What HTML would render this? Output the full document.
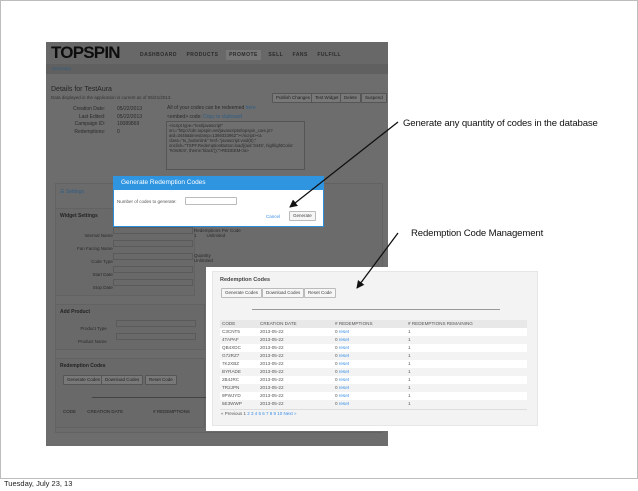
<!DOCTYPE html>
<html><head><style>
*{margin:0;padding:0;box-sizing:border-box}
body{width:638px;height:491px;background:#fff;position:relative;overflow:hidden;font-family:"Liberation Sans",sans-serif}
.a{position:absolute}
.t{position:absolute;font-size:5px;color:#3a3a3a;white-space:nowrap}
.btn{position:absolute;height:10px;border:1px solid #bbb;background:#f6f6f6;font-size:4.5px;color:#444;line-height:8px;padding:0 3px;border-radius:1px;white-space:nowrap}
.row{position:absolute;left:8px;width:318px;height:8px;font-size:4.6px;color:#555;line-height:8px}
.row span{position:absolute}
.lk{color:#3a8ee6}
</style></head><body>
<div class="a" style="left:0;top:0;width:638px;height:479px;border:1px solid #bdbdbd"></div>
<!-- dark screenshot -->
<div class="a" style="left:46px;top:42px;width:342px;height:404px;background:#6d6d6d"></div>
<div class="a" style="left:46px;top:42px;width:342px;height:22px;background:#686868"></div>
<div class="a" style="left:51px;top:44px;font-size:17px;font-weight:bold;color:#0d0d0d;letter-spacing:-0.8px;line-height:17px">TOPSPIN</div>
<div class="t" style="left:140px;top:52px;color:#2a2a2a;font-weight:bold;letter-spacing:.5px">DASHBOARD &nbsp;&nbsp;&nbsp; PRODUCTS &nbsp;&nbsp;&nbsp;<span style="background:#777;padding:2px 3px">PROMOTE</span>&nbsp;&nbsp;&nbsp; SELL &nbsp;&nbsp;&nbsp; FANS &nbsp;&nbsp;&nbsp; FULFILL</div>
<div class="a" style="left:46px;top:64px;width:342px;height:10px;background:#606060"></div>
<div class="t" style="left:52px;top:66px;color:#2d5d85;font-size:4.5px">Summary</div>
<div class="t" style="left:51px;top:86px;font-size:7px;color:#252525">Details for TestAura</div>
<div class="t" style="left:51px;top:95px;font-size:4.5px;color:#333">Data displayed in the application is current as of 05/21/2013.</div>
<div class="btn" style="left:272px;top:93px;background:#787878;border-color:#555;color:#222">Publish Changes</div>
<div class="btn" style="left:311px;top:93px;background:#787878;border-color:#555;color:#222">Test Widget</div>
<div class="btn" style="left:340px;top:93px;background:#787878;border-color:#555;color:#222">Delete</div>
<div class="btn" style="left:361px;top:93px;background:#787878;border-color:#555;color:#222">Suspend</div>
<div class="t" style="left:73px;top:106px;line-height:7.5px;text-align:right;color:#2a2a2a">Creation Date:<br>Last Edited:<br>Campaign ID:<br>Redemptions:</div>
<div class="t" style="left:117px;top:106px;line-height:7.5px;color:#2a2a2a">05/22/2013<br>05/22/2013<br>10089869<br>0</div>
<div class="t" style="left:167px;top:105px;color:#2a2a2a">All of your codes can be redeemed <span style="color:#2d5d85">here</span></div>
<div class="t" style="left:167px;top:114px;color:#2a2a2a">&lt;embed&gt; code: <span style="color:#2d5d85">Copy to clipboard</span></div>
<div class="a" style="left:166px;top:121px;width:139px;height:49px;border:1px solid #555;background:#6f6f6f"></div>
<div class="t" style="left:169px;top:123px;font-size:4.3px;line-height:5px;color:#2a2a2a">&lt;script type="text/javascript"<br>src="http://cdn.topspin.net/javascripts/topspin_core.js?<br>aId=3445&amp;timestamp=1369333962"&gt;&lt;/script&gt;&lt;a<br>class="ts_buttonlink" href="javascript:void(0);"<br>onclick="TSPF.RedemptionButton.load({aid:'3445', highlightColor:<br>'#c9c9c9', theme:'black'});"&gt;REDEEM&lt;/a&gt;</div>
<div class="a" style="left:55px;top:183px;width:328px;height:250px;border:1px solid #626262;background:#6b6b6b"></div>
<div class="t" style="left:60px;top:189px;color:#2d5d85;font-size:5px">☰ Settings</div>
<div class="a" style="left:55px;top:208px;width:140px;height:88px;border:1px solid #626262;background:#696969"></div>
<div class="t" style="left:60px;top:213px;font-weight:bold;color:#222;font-size:5px">Widget Settings</div>
<div class="t" style="left:77px;top:229px;color:#2a2a2a;line-height:13px;text-align:right;font-size:4.5px">Internal Name<br>Fan Facing Name<br>Code Type<br>Start Date<br>Stop Date</div>
<div class="a" style="left:113px;top:227px;width:80px;height:7px;border:1px solid #5a5a5a"></div>
<div class="a" style="left:113px;top:240px;width:80px;height:7px;border:1px solid #5a5a5a"></div>
<div class="a" style="left:113px;top:253px;width:80px;height:7px;border:1px solid #5a5a5a"></div>
<div class="a" style="left:113px;top:266px;width:80px;height:7px;border:1px solid #5a5a5a"></div>
<div class="a" style="left:113px;top:279px;width:80px;height:7px;border:1px solid #5a5a5a"></div>
<div class="t" style="left:194px;top:228px;color:#2a2a2a;font-size:4.5px">Redemptions Per Code<br>1 &nbsp;&nbsp;&nbsp;&nbsp;&nbsp;&nbsp; Unlimited</div>
<div class="t" style="left:194px;top:253px;color:#2a2a2a;font-size:4.5px">Quantity<br>Unlimited</div>
<div class="a" style="left:55px;top:304px;width:150px;height:46px;border:1px solid #626262;background:#696969"></div>
<div class="t" style="left:60px;top:309px;font-weight:bold;color:#222">Add Product</div>
<div class="t" style="left:78px;top:322px;color:#2a2a2a;line-height:13px;text-align:right;font-size:4.5px">Product Type<br>Product Name</div>
<div class="a" style="left:116px;top:320px;width:80px;height:7px;border:1px solid #5a5a5a"></div>
<div class="a" style="left:116px;top:333px;width:80px;height:7px;border:1px solid #5a5a5a"></div>
<div class="a" style="left:55px;top:358px;width:150px;height:70px;border:1px solid #626262;background:#696969"></div>
<div class="t" style="left:60px;top:363px;font-weight:bold;color:#222">Redemption Codes</div>
<div class="btn" style="left:63px;top:375px;background:#787878;border-color:#555;color:#222">Generate Codes</div>
<div class="btn" style="left:101px;top:375px;background:#787878;border-color:#555;color:#222">Download Codes</div>
<div class="btn" style="left:145px;top:375px;background:#787878;border-color:#555;color:#222">Reset Code</div>
<div class="a" style="left:92px;top:397px;width:120px;height:1px;background:#444"></div>
<div class="t" style="left:63px;top:409px;font-size:4.5px;color:#222">CODE &nbsp;&nbsp;&nbsp;&nbsp;&nbsp;&nbsp;&nbsp; CREATION DATE &nbsp;&nbsp;&nbsp;&nbsp;&nbsp;&nbsp;&nbsp;&nbsp;&nbsp;&nbsp;&nbsp;&nbsp;&nbsp;&nbsp;&nbsp;&nbsp;&nbsp;&nbsp;&nbsp;&nbsp;&nbsp;&nbsp; # REDEMPTIONS</div>
<!-- modal -->
<div class="a" style="left:113px;top:176px;width:211px;height:51px;background:#fff;border:1px solid #2b8fdc"></div>
<div class="a" style="left:113px;top:176px;width:211px;height:14px;background:#2f95e1"></div>
<div class="t" style="left:121px;top:179px;color:#fff;font-size:6.5px">Generate Redemption Codes</div>
<div class="t" style="left:117px;top:199px;color:#555;font-size:4.5px">Number of codes to generate:</div>
<div class="a" style="left:185px;top:197px;width:52px;height:8px;border:1px solid #bbb;border-radius:1px"></div>
<div class="t" style="left:266px;top:214px;color:#3a8ee6;font-size:4.5px">Cancel</div>
<div class="btn" style="left:289px;top:211px">Generate</div>
<!-- panel -->
<div class="a" style="left:206px;top:267px;width:336px;height:164px;background:#fff"></div>
<div class="a" style="left:212px;top:271px;width:326px;height:155px;background:#f3f3f3;border:1px solid #e6e6e6"></div>
<div class="t" style="left:220px;top:277px;font-weight:bold;color:#444;font-size:5.5px">Redemption Codes</div>
<div class="btn" style="left:221px;top:288px">Generate Codes</div>
<div class="btn" style="left:262px;top:288px">Download Codes</div>
<div class="btn" style="left:304px;top:288px">Reset Code</div>
<div class="a" style="left:252px;top:309px;width:248px;height:1px;background:#999"></div>
<div class="row" style="left:220px;top:320px;background:#e8e8e8;width:307px"><span style="left:2px">CODE</span><span style="left:40px">CREATION DATE</span><span style="left:115px">#&nbsp;REDEMPTIONS</span><span style="left:188px">#&nbsp;REDEMPTIONS REMAINING</span></div>
<div id="rows"></div>
<div class="t" style="left:221px;top:411px;font-size:4.5px;color:#555">« Previous 1 <span class="lk">2 3 4 5 6 7 8 9 10 Next »</span></div>
<div class="a" style="left:220px;top:409px;width:307px;height:1px;background:#ddd"></div>
<!-- annotations -->
<div class="t" style="left:403px;top:118px;font-size:9.6px;color:#111;letter-spacing:-0.15px">Generate any quantity of codes in the database</div>
<div class="t" style="left:411px;top:228px;font-size:9.6px;color:#111;letter-spacing:-0.15px">Redemption Code Management</div>
<svg class="a" style="left:0;top:0" width="638" height="491">
<defs><marker id="m" markerWidth="8" markerHeight="8" refX="7" refY="4" orient="auto" markerUnits="userSpaceOnUse"><path d="M0,0 L8,4 L0,8 Z" fill="#111"/></marker></defs>
<line x1="398" y1="122" x2="290" y2="207" stroke="#111" stroke-width="1.3" marker-end="url(#m)"/>
<line x1="398" y1="233" x2="357" y2="288" stroke="#111" stroke-width="1.3" marker-end="url(#m)"/>
</svg>
<div class="t" style="left:4px;top:479px;font-size:7.5px;color:#222">Tuesday, July 23, 13</div>
<script>
var c=["C3CNT5","4TAPAF","QB4XDC","G72RZ7","7K2XBZ","BYRADE","2B4JRC","TR2JPN","9PWJYD","5E3WWP"],h="";
for(var i=0;i<10;i++){h+='<div class="row" style="left:220px;top:'+(328+i*8)+'px;width:307px;background:'+(i%2?'#f3f3f3':'#fff')+'"><span style="left:2px">'+c[i]+'</span><span style="left:40px">2013-05-22</span><span style="left:115px">0 <span class="lk" style="position:static">reset</span></span><span style="left:188px">1</span></div>';}
document.getElementById("rows").innerHTML=h;
</script>
</body></html>
